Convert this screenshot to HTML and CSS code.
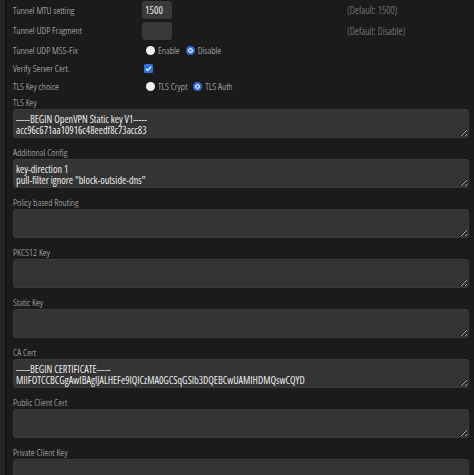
FILE: index.html
```html
<!DOCTYPE html>
<html>
<head>
<meta charset="utf-8">
<link rel="stylesheet" href="styles.css">
</head>
<body>
<div class="page">
  <div class="side"></div>
  <main class="content">
    <div class="settings">
      <div class="lbl">Tunnel MTU setting</div>
      <div class="ctl"><input class="num" type="text" value="1500"></div>
      <div class="def">(Default: 1500)</div>

      <div class="lbl">Tunnel UDP Fragment</div>
      <div class="ctl"><input class="num" type="text" value=""></div>
      <div class="def">(Default: Disable)</div>

      <div class="lbl">Tunnel UDP MSS-Fix</div>
      <div class="ctl">
        <span class="radio"></span><span class="opt">Enable</span>
        <span class="radio on"></span><span class="opt">Disable</span>
      </div>
      <div class="def"></div>

      <div class="lbl">Verify Server Cert.</div>
      <div class="ctl">
        <span class="check"><svg viewBox="0 0 10 10" width="9" height="9"><path d="M2.2 5.2 L4.2 7.1 L7.9 2.9" fill="none" stroke="#fff" stroke-width="1.5"/></svg></span>
      </div>
      <div class="def"></div>

      <div class="lbl">TLS Key choice</div>
      <div class="ctl">
        <span class="radio"></span><span class="opt">TLS Crypt</span>
        <span class="radio on"></span><span class="opt">TLS Auth</span>
      </div>
      <div class="def"></div>
    </div>

    <div class="block">
      <div class="blabel">TLS Key</div>
      <textarea class="area">-----BEGIN OpenVPN Static key V1-----
acc96c671aa10916c48eedf8c73acc83</textarea>
    </div>
    <div class="block">
      <div class="blabel">Additional Config</div>
      <textarea class="area">key-direction 1
pull-filter ignore "block-outside-dns"</textarea>
    </div>
    <div class="block">
      <div class="blabel">Policy based Routing</div>
      <textarea class="area"></textarea>
    </div>
    <div class="block">
      <div class="blabel">PKCS12 Key</div>
      <textarea class="area"></textarea>
    </div>
    <div class="block">
      <div class="blabel">Static Key</div>
      <textarea class="area"></textarea>
    </div>
    <div class="block">
      <div class="blabel">CA Cert</div>
      <textarea class="area">-----BEGIN CERTIFICATE-----
MIIFOTCCBCGgAwIBAgIJALHEFe9IQICzMA0GCSqGSIb3DQEBCwUAMIHDMQswCQYD</textarea>
    </div>
    <div class="block">
      <div class="blabel">Public Client Cert</div>
      <textarea class="area"></textarea>
    </div>
    <div class="block">
      <div class="blabel">Private Client Key</div>
      <textarea class="area"></textarea>
    </div>
  </main>
</div>
</body>
</html>
```
FILE: styles.css
```css
html, body {
  margin: 0;
  padding: 0;
  background: #1b1b1b;
  overflow: hidden;
}
body {
  font-family: "Open Sans", "Liberation Sans", Arial, sans-serif;
  font-stretch: 75%;
  font-weight: 300;
  font-size: 9.8px;
  color: #c2c2c2;
}
.page {
  display: flex;
  min-height: 475px;
}
.side {
  width: 5px;
  flex: none;
  background: #242424;
  border-right: 2px solid #101010;
}
.content {
  flex: 1;
  padding: 0 5px 0 6px;
}
.settings {
  display: grid;
  grid-template-columns: 130px 204px 1fr;
  grid-template-rows: 20px 21px 18px 18px 18px;
  align-items: center;
}
.lbl {
  color: #c8c8c8;
}
.def {
  color: #929292;
  font-size: 10.3px;
}
.ctl {
  display: flex;
  align-items: center;
}
.num {
  box-sizing: border-box;
  width: 30px;
  height: 18px;
  border: none;
  border-radius: 3px;
  background: #393939;
  color: #e6e6e6;
  font-family: "Open Sans", "Liberation Sans", Arial, sans-serif;
  font-stretch: 75%;
  font-weight: 400;
  font-size: 10.5px;
  padding: 0 0 0 3px;
  margin: 0 0 0 -1px;
  outline: none;
}
.radio {
  box-sizing: border-box;
  width: 9px;
  height: 9px;
  border-radius: 50%;
  background: #f2f2f2;
  margin: 0 3px 0 3px;
  flex: none;
}
.radio.on {
  background: #2f6fe0;
  border: 2px solid #2f6fe0;
  box-shadow: inset 0 0 0 1.2px #fff;
  margin-left: 6px;
}
.opt {
  color: #cacaca;
}
.check {
  display: inline-flex;
  width: 9px;
  height: 9px;
  border-radius: 1.5px;
  background: #2f6fe0;
  margin-left: 1px;
}
.block {
  display: flex;
  flex-direction: column;
  margin-bottom: 7px;
}
.blabel {
  height: 14px;
  line-height: 15px;
  color: #c2c2c2;
}
.area {
  box-sizing: border-box;
  display: block;
  width: 100%;
  height: 29px;
  margin: 0;
  padding: 4px 2px 2px;
  background: #343434;
  border: 1px solid #3b3b3b;
  border-radius: 3px;
  color: #ececec;
  font-family: "Open Sans", "Liberation Sans", Arial, sans-serif;
  font-stretch: 75%;
  font-weight: 400;
  font-size: 10.2px;
  line-height: 11px;
  resize: vertical;
  overflow: hidden;
  outline: none;
  color-scheme: dark;
}
```
